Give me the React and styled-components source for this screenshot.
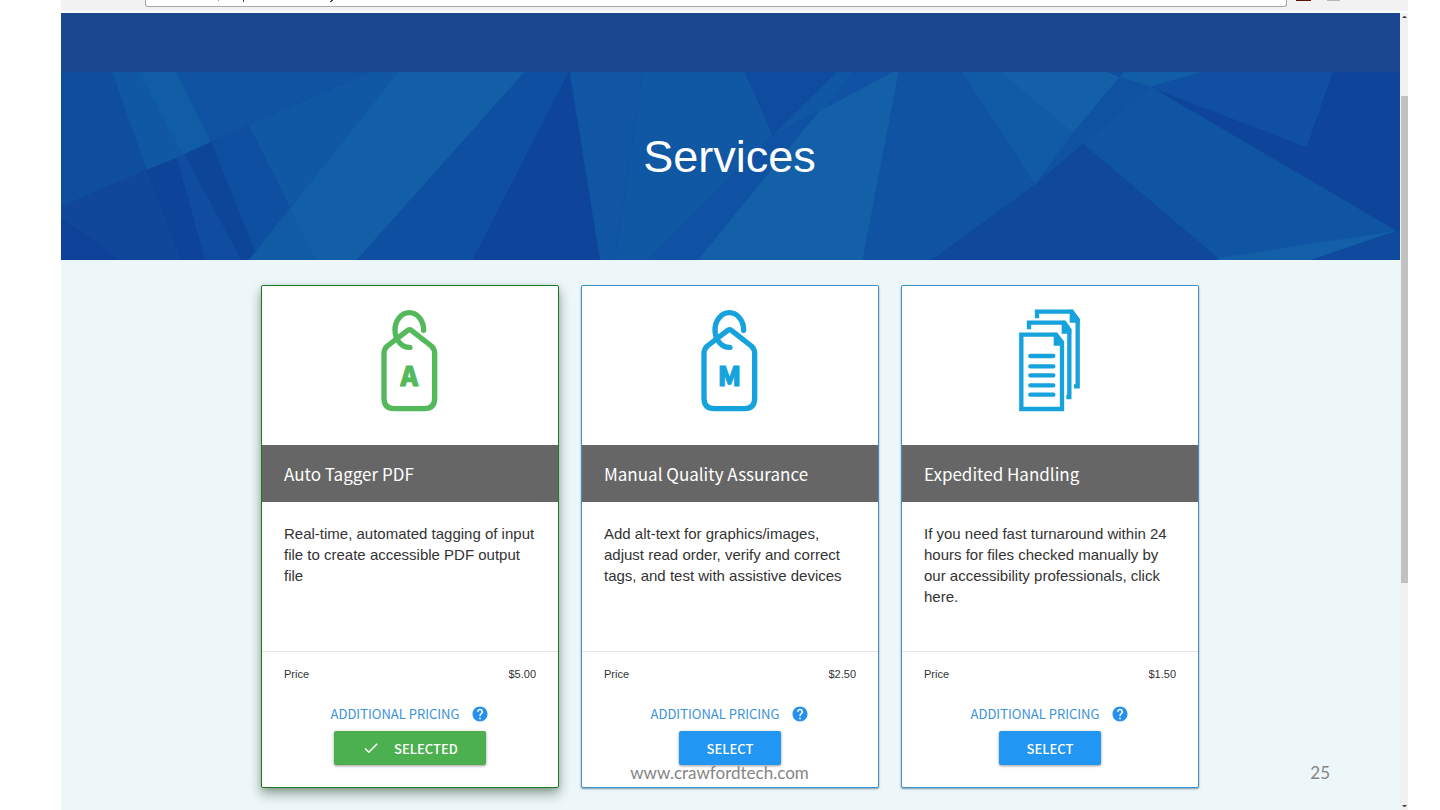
import React from "react";
import styled, { createGlobalStyle } from "styled-components";
import { MdCheck, MdHelp } from "react-icons/md";

const services = [
  {
    id: "auto",
    icon: "A",
    title: "Auto Tagger PDF",
    text: "Real-time, automated tagging of input file to create accessible PDF output file",
    price: "$5.00",
    selected: true,
  },
  {
    id: "manual",
    icon: "M",
    title: "Manual Quality Assurance",
    text: "Add alt-text for graphics/images, adjust read order, verify and correct tags, and test with assistive devices",
    price: "$2.50",
  },
  {
    id: "expedited",
    icon: "pages",
    title: "Expedited Handling",
    text: "If you need fast turnaround within 24 hours for files checked manually by our accessibility professionals, click here.",
    price: "$1.50",
  },
];

// facets of the hero background, painted in order
const facets = [
  ["#0f4d9f", "0,0 51,0 86,98 0,135"],
  ["#10479b", "0,135 86,98 121,188 0,188"],
  ["#0e4298", "0,146 59,188 0,188"],
  ["#1058a3", "51,0 77,0 122,83 86,98"],
  ["#105da6", "77,0 116,0 150,70 122,83"],
  ["#1053a2", "116,0 309,0 187,53 150,70"],
  ["#1057a4", "309,0 337,0 229,136 187,53"],
  ["#0f4fa1", "150,70 187,53 229,136 188,188"],
  ["#0d4398", "86,98 116,86 144,188 121,188"],
  ["#104da0", "116,86 124,82 181,188 144,188"],
  ["#0d4599", "124,82 150,70 194,180 188,188 181,188"],
  ["#125fa8", "337,0 464,0 296,188 188,188"],
  ["#105ba4", "229,136 254,188 188,188"],
  ["#0f4fa1", "464,0 508,0 412,188 296,188"],
  ["#0e4499", "508,0 539,188 412,188"],
  ["#1056a4", "509,0 582,0 554,188 539,188"],
  ["#1057a4", "582,0 684,0 712,63 586,188 554,188"],
  ["#0f4ca0", "684,0 776,0 712,63"],
  ["#1058a5", "776,0 792,0 766,35 712,63"],
  ["#1052a3", "792,0 832,0 766,35"],
  ["#0f52a3", "712,63 759,38 637,188 586,188"],
  ["#1360a9", "838,0 832,0 766,35 759,38 637,188 802,188"],
  ["#0f53a2", "838,0 901,0 974,113 889,175 871,188 802,188"],
  ["#115aa6", "901,0 939,0 1012,61 974,113"],
  ["#1460a8", "939,0 1047,0 1059,5 1012,61"],
  ["#0f52a2", "1059,5 1090,15 1022,72 974,113 1012,61"],
  ["#0f4ea1", "1047,0 1063,0 1059,5"],
  ["#115da6", "1063,0 1142,0 1090,15 1059,5"],
  ["#104fa1", "1142,0 1272,0 1246,76 1090,15"],
  ["#0e4499", "1272,0 1339,0 1339,160 1334,158 1092,17 1246,76"],
  ["#1055a3", "1090,15 1334,158 1159,188 1022,72"],
  ["#10489c", "1022,72 1159,188 871,188 889,175 974,113"],
  ["#1360a9", "1334,159 1159,186 1156,188 1250,188"],
  ["#0f4a9e", "1339,158 1334,160 1250,188 1339,188"],
];

function HeroArt() {
  return (
    <Art viewBox="0 0 1339 188" preserveAspectRatio="none" aria-hidden="true">
      {facets.map(([color, points]) => (
        <polygon key={points} points={points} fill={color} stroke={color} strokeWidth="0.4" />
      ))}
    </Art>
  );
}

function TagIcon({ letter }) {
  return (
    <svg width="60" height="105" viewBox="90 55 180 315" aria-hidden="true">
      <g fill="none" stroke="currentColor" strokeWidth="16" strokeLinecap="round" strokeLinejoin="round">
        <path d="M172 123Q178 118 185 123L244 169Q254 178 254 192V326Q254 357 223 357H133Q102 357 102 326V192Q102 178 112 169Z" />
        <path d="M221 122A43 52 0 1 0 180 173" />
      </g>
      <IconLetter x="178" y="290" textAnchor="middle">
        {letter}
      </IconLetter>
    </svg>
  );
}

function PagesIcon() {
  return (
    <svg width="65" height="105" viewBox="83 55 195 315" aria-hidden="true">
      <g fill="none" stroke="currentColor" strokeWidth="13">
        <path d="M93 135H197L215 158V358H93Z" />
        <path d="M116 119V99H222L237 120V322H228" />
        <path d="M140 86V66H244L262 90V290H251" />
        <path strokeLinecap="round" d="M120 199H189M120 230H189M120 257H189M120 287H189M120 315H189" />
      </g>
      <g fill="currentColor">
        <path d="M190 129H200L221 158V168H190Z" />
        <path d="M214 93H224L243 120V132H214Z" />
        <path d="M238 60H248L268 88V99H238Z" />
      </g>
    </svg>
  );
}

function ServiceCard(props) {
  const { icon, title, text, price, selected } = props;
  return (
    <Card $selected={selected}>
      <Picture $selected={selected}>
        {icon === "pages" ? <PagesIcon /> : <TagIcon letter={icon} />}
      </Picture>
      <CardTitle>{title}</CardTitle>
      <Description>{text}</Description>
      <Price>
        <dt>Price</dt>
        <dd>{price}</dd>
      </Price>
      <Actions>
        <Pricing>
          <PricingLink href="#pricing">ADDITIONAL PRICING</PricingLink>
          <HelpButton type="button" aria-label={"Pricing help for " + title}>
            <MdHelp size={18} />
          </HelpButton>
        </Pricing>
        <SelectButton type="button" $selected={selected}>
          {selected && <MdCheck size={18} />}
          {selected ? "SELECTED" : "SELECT"}
        </SelectButton>
      </Actions>
    </Card>
  );
}

function App() {
  return (
    <Slide>
      <GlobalStyle />
      <BrowserBar>
        <AddressField>
          <Address type="text" aria-label="Address" />
          {/* descenders of the scrolled-off address */}
          <AddressMarks viewBox="0 0 200 4" aria-hidden="true">
            <path fill="#999" d="M73 0h1v1h-1z" />
            <path fill="#444" d="M98 0h1v2h-1zM186 0h2v1h-1v1h-2v-1h1z" />
          </AddressMarks>
        </AddressField>
        <BarIcons viewBox="0 0 121 13" aria-hidden="true">
          <path fill="#5a120c" d="M9 0h15v1H9z" />
          <path fill="#b9b5bb" d="M40 0h13v1H40z" />
        </BarIcons>
      </BrowserBar>
      <Viewport>
        <Page>
          <TopBar />
          <Hero>
            <HeroArt />
            <h1>Services</h1>
          </Hero>
          <Cards>
            {services.map((service) => (
              <ServiceCard key={service.id} {...service} />
            ))}
          </Cards>
        </Page>
        <Scrollbar aria-hidden="true">
          <Arrow viewBox="0 0 7 8">
            <path d="M1 5L3 3H4L6 5Z" />
          </Arrow>
          <Thumb />
          <Arrow viewBox="0 0 7 8">
            <path d="M1 3L3 5H4L6 3Z" />
          </Arrow>
        </Scrollbar>
      </Viewport>
      <SlideFooter>
        <span />
        <span>www.crawfordtech.com</span>
        <PageNumber>25</PageNumber>
      </SlideFooter>
    </Slide>
  );
}

const GlobalStyle = createGlobalStyle`
  * {
    box-sizing: border-box;
  }
  body {
    margin: 0;
    background-color: #fff;
    font-family: "Liberation Sans", Arial, sans-serif;
  }
`;

const Slide = styled.div`
  position: relative;
  display: flex;
  flex-direction: column;
  min-height: 100vh;
  padding: 0 32px 0 61px;
`;

const BrowserBar = styled.div`
  display: flex;
  align-items: flex-start;
  height: 13px;
  padding-left: 84px;
  background-color: #f2f2f2;
  border-bottom: 2px solid #f8ffff;
`;

const AddressField = styled.div`
  position: relative;
  flex: 1;
  display: flex;
`;

const Address = styled.input`
  flex: 1;
  height: 7px;
  padding: 0 8px;
  background-color: #fff;
  border: 1px solid #a5a5ab;
  border-top: 0;
  border-radius: 0 0 3px 3px;
`;

const AddressMarks = styled.svg`
  position: absolute;
  top: 0;
  left: 0;
  width: 200px;
  height: 4px;
`;

const BarIcons = styled.svg`
  width: 121px;
  height: 13px;
`;

const Viewport = styled.div`
  flex: 1;
  display: flex;
`;

const Page = styled.main`
  flex: 1;
  background-color: #edf6f9;
`;

const TopBar = styled.div`
  height: 59px;
  background-color: #1a4790;
`;

const Hero = styled.header`
  position: relative;
  display: flex;
  align-items: center;
  justify-content: center;
  height: 188px;
  background-color: #0f4fa1;
  h1 {
    position: relative;
    margin: 0;
    padding: 0 2px 18px 0;
    color: #fff;
    font-size: 45px;
    font-weight: 400;
    line-height: 52px;
  }
`;

const Art = styled.svg`
  position: absolute;
  inset: 0;
  width: 100%;
  height: 100%;
`;

const Cards = styled.section`
  display: grid;
  grid-template-columns: repeat(3, 1fr);
  gap: 22px;
  padding: 25px 201px 22px 200px;
`;

const Card = styled.article`
  display: flex;
  flex-direction: column;
  background-color: #fff;
  border: 1px solid ${(props) => (props.$selected ? "#1b7a20" : "#3d93cb")};
  border-radius: 2px;
  box-shadow: ${(props) =>
    props.$selected
      ? "0 6px 12px rgba(0, 40, 10, 0.4), 0 1px 4px rgba(0, 60, 10, 0.15)"
      : "0 1px 2px rgba(0, 60, 90, 0.5)"};
`;

const Picture = styled.div`
  display: flex;
  justify-content: center;
  height: 159px;
  padding-top: 22px;
  color: ${(props) => (props.$selected ? "#53b95b" : "#16a2dc")};
`;

const IconLetter = styled.text`
  fill: currentColor;
  font-family: "Noto Sans CJK SC", sans-serif;
  font-size: 80px;
  font-weight: 900;
  stroke: currentColor;
  stroke-width: 3px;
`;

const CardTitle = styled.h2`
  margin: 0;
  padding: 0 22px;
  background-color: #666;
  color: #fff;
  font-family: "Noto Sans CJK SC", sans-serif;
  font-size: 17px;
  font-weight: 400;
  line-height: 57px;
`;

const Description = styled.p`
  flex: 1;
  min-height: 149px;
  margin: 0;
  padding: 21px 22px;
  color: #333;
  font-size: 15px;
  line-height: 21px;
`;

const Price = styled.dl`
  display: flex;
  justify-content: space-between;
  margin: 0;
  padding: 14px 22px;
  border-top: 1px solid #e4e4e4;
  color: #333;
  font-size: 11px;
  line-height: 16px;
  dd {
    margin: 0;
  }
`;

const Actions = styled.div`
  display: flex;
  flex-direction: column;
  align-items: center;
  padding: 5px 22px 22px;
  font-family: "Noto Sans CJK SC", sans-serif;
`;

const Pricing = styled.div`
  display: flex;
  align-items: center;
  gap: 12px;
  height: 26px;
`;

const PricingLink = styled.a`
  color: #3a92d8;
  font-size: 13px;
  line-height: 20px;
  text-decoration: none;
`;

const HelpButton = styled.button`
  display: flex;
  padding: 0;
  background: none;
  border: 0;
  color: #2790ea;
  cursor: pointer;
`;

const SelectButton = styled.button`
  display: flex;
  align-items: center;
  gap: 14px;
  height: 34px;
  margin-top: 4px;
  padding: 0 28px;
  background-color: ${(props) => (props.$selected ? "#4caf50" : "#2196f3")};
  border: 0;
  border-radius: 2px;
  box-shadow: 0 1px 3px rgba(0, 0, 0, 0.4);
  color: #fff;
  font-family: inherit;
  font-size: 13px;
  font-weight: 500;
  cursor: pointer;
`;

const Scrollbar = styled.div`
  display: flex;
  flex-direction: column;
  width: 8px;
  padding-left: 1px;
  background-color: #f1f1f1;
`;

const Arrow = styled.svg`
  width: 7px;
  height: 8px;
  fill: #444;
`;

const Thumb = styled.div`
  height: 487px;
  margin: 75px 0 auto;
  background-color: #c1c1c1;
`;

const SlideFooter = styled.footer`
  position: absolute;
  right: 110px;
  bottom: 26px;
  left: 109px;
  display: grid;
  grid-template-columns: 1fr auto 1fr;
  color: #858585;
  font-family: Lato, sans-serif;
  font-size: 17px;
  line-height: 22px;
`;

const PageNumber = styled.span`
  text-align: right;
`;

export default App;
